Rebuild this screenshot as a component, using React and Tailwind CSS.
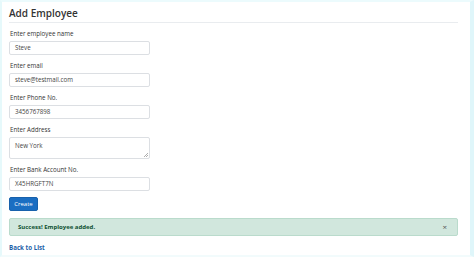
import React from 'react';

const FIELDS = [
  { label: 'Enter employee name', value: 'Steve' },
  { label: 'Enter email', value: 'steve@testmail.com' },
  { label: 'Enter Phone No.', value: '3456767898' },
  { label: 'Enter Address', value: 'New York', area: true },
  { label: 'Enter Bank Account No.', value: 'X45HRGFT7N' },
];

function Field({ label, value, area }) {
  return (
    <div className="mb-[6px]">
      <div className="text-[6.2px] leading-[9px] text-[#333] mb-[3px] ml-[1px]">{label}</div>
      {area ? (
        <div className="relative w-[141px] h-[22px] border border-[#dcdfe3] rounded-[2px] px-[5px] pt-[3px] text-[6.2px] leading-[9px] text-[#444]">
          {value}
          {/* resize grip */}
          <svg className="absolute right-[1px] bottom-[1px]" width="5" height="5" viewBox="0 0 5 5">
            <path d="M5 1 L1 5 M5 3 L3 5" stroke="#999" strokeWidth="0.8" />
          </svg>
        </div>
      ) : (
        <div className="w-[141px] h-[14px] border border-[#dcdfe3] rounded-[2px] px-[5px] flex items-center text-[6.2px] text-[#444]">
          {value}
        </div>
      )}
    </div>
  );
}

export default function App() {
  return (
    <div
      className="w-[474px] h-[257px] bg-white border-t-2 border-l-2 border-r-4 border-b-2 border-t-[#ecfbfd] border-l-[#e6f9fb] border-r-[#dff6fa] border-b-[#f2fbfc] overflow-hidden"
      style={{ fontFamily: '"Open Sans", "Noto Sans", sans-serif' }}
    >
      <div className="pl-[7px] pr-[12px] pt-[4px]">
        <h1 className="text-[10px] font-semibold text-[#333] leading-[14px]">Add Employee</h1>
        <div className="h-px bg-[#e9ecef] mt-[2px] mb-[6px]" />

        {FIELDS.map((f) => (
          <Field key={f.label} {...f} />
        ))}

        <button className="w-[29px] h-[14px] bg-[#1b6ec2] border border-[#1861ac] rounded-[2px] text-white text-[6px] flex items-center justify-center">
          Create
        </button>

        <div className="mt-[7px] w-[449px] h-[18px] bg-[#d1e7dd] border border-[#badbcc] rounded-[2px] flex items-center justify-between pl-[8px] pr-[10px]">
          <span className="text-[6px] font-bold text-[#0f5132]">Success! Employee added.</span>
          <span className="text-[8px] text-[#555] leading-none">×</span>
        </div>

        <div className="mt-[7px] text-[6.2px] leading-[9px] font-bold text-[#1e5fa8]">Back to List</div>
      </div>
    </div>
  );
}
